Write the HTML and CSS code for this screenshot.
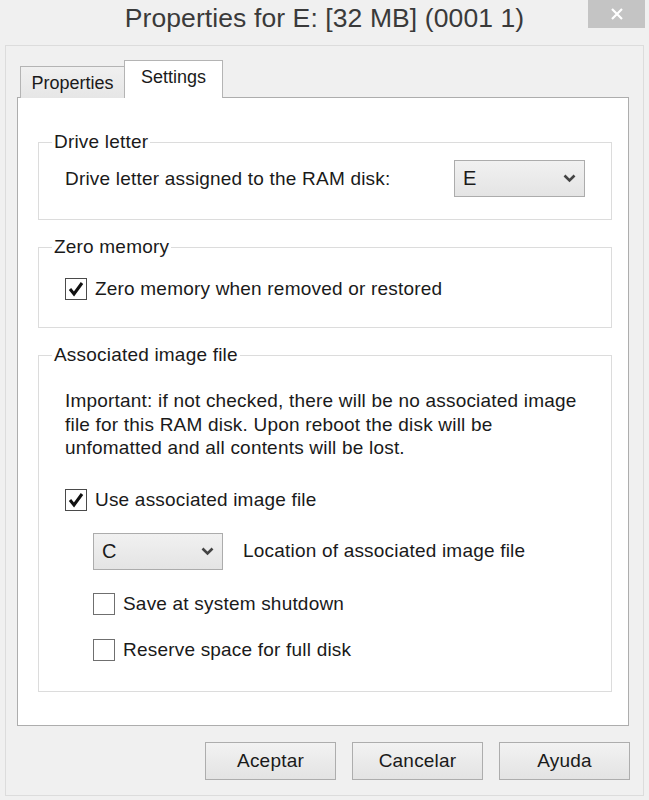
FILE: index.html
```html
<!DOCTYPE html>
<html lang="en">
<head>
    <meta charset="UTF-8">
    <meta name="viewport" content="width=device-width, initial-scale=1.0">
    <title>Properties for E: [32 MB] (0001 1)</title>
    <link rel="stylesheet" href="styles.css">
</head>
<body>
    <div class="window">
        <div class="titlebar">
            <span class="title">Properties for E: [32 MB] (0001 1)</span>
            <div class="close">
                <svg width="14" height="14" viewBox="0 0 14 14"><path d="M2 2 L12 12 M12 2 L2 12" stroke="#fff" stroke-width="2.2" fill="none"/></svg>
            </div>
        </div>

        <div class="frame">
            <div class="tabs">
                <div class="tab">Properties</div>
                <div class="tab active">Settings</div>
            </div>

            <div class="panel">
                <fieldset class="group group-drive">
                    <legend>Drive letter</legend>
                    <div class="row between">
                        <span>Drive letter assigned to the RAM disk:</span>
                        <div class="combo combo-drive">
                            <span>E</span>
                            <svg width="13" height="9" viewBox="0 0 13 9"><path d="M1.5 1.5 L6.5 6.5 L11.5 1.5" stroke="#444" stroke-width="2.6" fill="none"/></svg>
                        </div>
                    </div>
                </fieldset>

                <fieldset class="group group-zero">
                    <legend>Zero memory</legend>
                    <label class="row check-row">
                        <span class="checkbox checked"><svg width="20" height="20" viewBox="0 0 20 20"><path d="M4 10 L8 15 L16 4" stroke="#111" stroke-width="3" fill="none"/></svg></span>
                        Zero memory when removed or restored
                    </label>
                </fieldset>

                <fieldset class="group group-image">
                    <legend>Associated image file</legend>
                    <p class="note">Important: if not checked, there will be no associated image<br>file for this RAM disk. Upon reboot the disk will be<br>unfomatted and all contents will be lost.</p>
                    <label class="row check-row use-row">
                        <span class="checkbox checked"><svg width="20" height="20" viewBox="0 0 20 20"><path d="M4 10 L8 15 L16 4" stroke="#111" stroke-width="3" fill="none"/></svg></span>
                        Use associated image file
                    </label>
                    <div class="row indent location-row">
                        <div class="combo combo-loc">
                            <span>C</span>
                            <svg width="13" height="9" viewBox="0 0 13 9"><path d="M1.5 1.5 L6.5 6.5 L11.5 1.5" stroke="#444" stroke-width="2.6" fill="none"/></svg>
                        </div>
                        <span>Location of associated image file</span>
                    </div>
                    <label class="row check-row indent opt-row">
                        <span class="checkbox"></span>
                        Save at system shutdown
                    </label>
                    <label class="row check-row indent opt-row">
                        <span class="checkbox"></span>
                        Reserve space for full disk
                    </label>
                </fieldset>
            </div>

            <div class="buttons">
                <button class="btn">Aceptar</button>
                <button class="btn">Cancelar</button>
                <button class="btn">Ayuda</button>
            </div>
        </div>
    </div>
</body>
</html>
```

FILE: styles.css
```css
* { margin: 0; padding: 0; box-sizing: border-box; }
body { font-family: 'Liberation Sans', Arial, sans-serif; font-size: 19px; letter-spacing: 0.2px; background: #f0f0f0; color: #1a1a1a; width: 649px; height: 800px; overflow: hidden; }
.window { width: 649px; height: 800px; }

.titlebar { height: 45px; display: flex; justify-content: center; padding-top: 3px; position: relative; }
.title { font-size: 26.5px; letter-spacing: 0.1px; color: #3a3a3a; line-height: 31px; }
.close { position: absolute; top: 0; left: 588px; width: 57px; height: 28px; background: #c4c4c4; display: flex; align-items: center; justify-content: center; }

.frame { margin-left: 5px; width: 639px; height: 751px; border: 1px solid #dcdcdc; padding: 14px 0 0 11px; }

.tabs { display: flex; align-items: flex-end; height: 38px; margin-bottom: -1px; position: relative; z-index: 1; }
.tab { height: 32px; width: 105px; margin-left: 3px; border: 1px solid #b4b4b4; border-bottom: none; background: linear-gradient(#f0f0f0, #e6e6e6); display: flex; align-items: center; justify-content: center; padding-top: 2px; font-size: 18px; letter-spacing: 0; }
.tab.active { height: 38px; width: 99px; margin-left: -1px; background: #fff; padding-top: 0; padding-bottom: 4px; }

.panel { width: 612px; height: 629px; border: 1px solid #adadad; background: #fff; padding: 33px 16px 0 20px; display: flex; flex-direction: column; gap: 16px; }

.group { border: 1px solid #dcdcdc; padding: 0 26px; }
.group legend { line-height: 22px; padding: 0 2px; margin-left: -13px; }
.group-drive { padding-top: 7px; padding-bottom: 22px; }
.group-zero { padding-top: 19px; padding-bottom: 26px; }
.group-image { padding-top: 23px; padding-bottom: 29px; }

.row { display: flex; align-items: center; }
.row.between { justify-content: space-between; }
.check-row { height: 24px; gap: 8px; }
.indent { margin-left: 28px; }

.checkbox { width: 22px; height: 22px; border: 1px solid #6f6f6f; background: #fff; display: flex; align-items: center; justify-content: center; flex-shrink: 0; }
.checkbox.checked { border-color: #4a4a4a; }

.combo { height: 37px; border: 1px solid #acacac; background: linear-gradient(#f1f1f1, #e4e4e4); display: flex; align-items: center; justify-content: space-between; padding: 0 8px 0 8px; font-size: 20px; }
.combo-drive { width: 131px; }
.combo-loc { width: 130px; }

.note { line-height: 23.5px; white-space: nowrap; }
.use-row { margin-top: 28px; }
.location-row { margin-top: 21px; gap: 20px; }
.opt-row { margin-top: 22px; }

.buttons { width: 613px; display: flex; justify-content: flex-end; gap: 16px; margin-top: 16px; }
.btn { width: 131px; height: 38px; border: 1px solid #adadad; background: linear-gradient(#f2f2f2, #e3e3e3); font-family: inherit; font-size: 19px; letter-spacing: 0.2px; color: #1a1a1a; }
```
